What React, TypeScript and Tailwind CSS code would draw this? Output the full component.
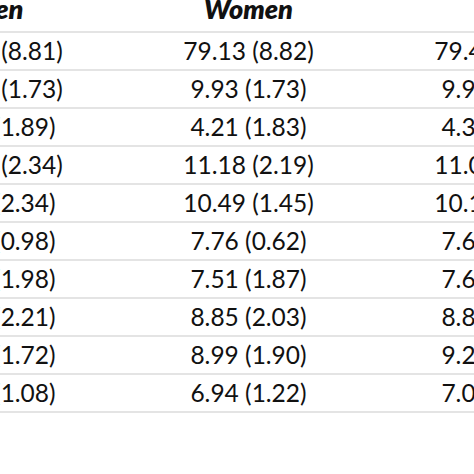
import React from 'react';

const rows: [string, string, string][] = [
  ['79.76 (8.81)', '79.13 (8.82)', '79.44 (8.81)'],
  ['10.03 (1.73)', '9.93 (1.73)', '9.98 (1.73)'],
  ['4.47 (1.89)', '4.21 (1.83)', '4.34 (1.86)'],
  ['11.02 (2.34)', '11.18 (2.19)', '11.09 (2.27)'],
  ['9.86 (2.34)', '10.49 (1.45)', '10.17 (1.96)'],
  ['7.58 (0.98)', '7.76 (0.62)', '7.67 (0.82)'],
  ['7.71 (1.98)', '7.51 (1.87)', '7.61 (1.93)'],
  ['8.81 (2.21)', '8.85 (2.03)', '8.83 (2.12)'],
  ['9.42 (1.72)', '8.99 (1.90)', '9.21 (1.82)'],
  ['7.12 (1.08)', '6.94 (1.22)', '7.03 (1.16)'],
];

const App: React.FC = () => {
  return (
    <div className="w-[474px] h-[474px] overflow-hidden bg-white text-[#111]" style={{ fontFamily: 'Lato, "Open Sans", sans-serif' }}>
      <div className="ml-[-128px] w-[753px]">
        {/* Header */}
        <div className="grid grid-cols-3 h-[33px] border-b-2 border-[#e4e4e4] overflow-hidden">
          <div className="flex justify-center -mt-[5px] text-[27px] leading-none font-extrabold italic">Men</div>
          <div className="flex justify-center -mt-[5px] text-[27px] leading-none font-extrabold italic">Women</div>
          <div />
        </div>

        {/* Rows */}
        {rows.map((r, i) => (
          <div key={i} className="grid grid-cols-3 h-[38px] border-b-2 border-[#e4e4e4] text-[24.5px]">
            {r.map((v, j) => (
              <div key={j} className="flex items-center justify-center">
                {v}
              </div>
            ))}
          </div>
        ))}
      </div>
    </div>
  );
};

export default App;
